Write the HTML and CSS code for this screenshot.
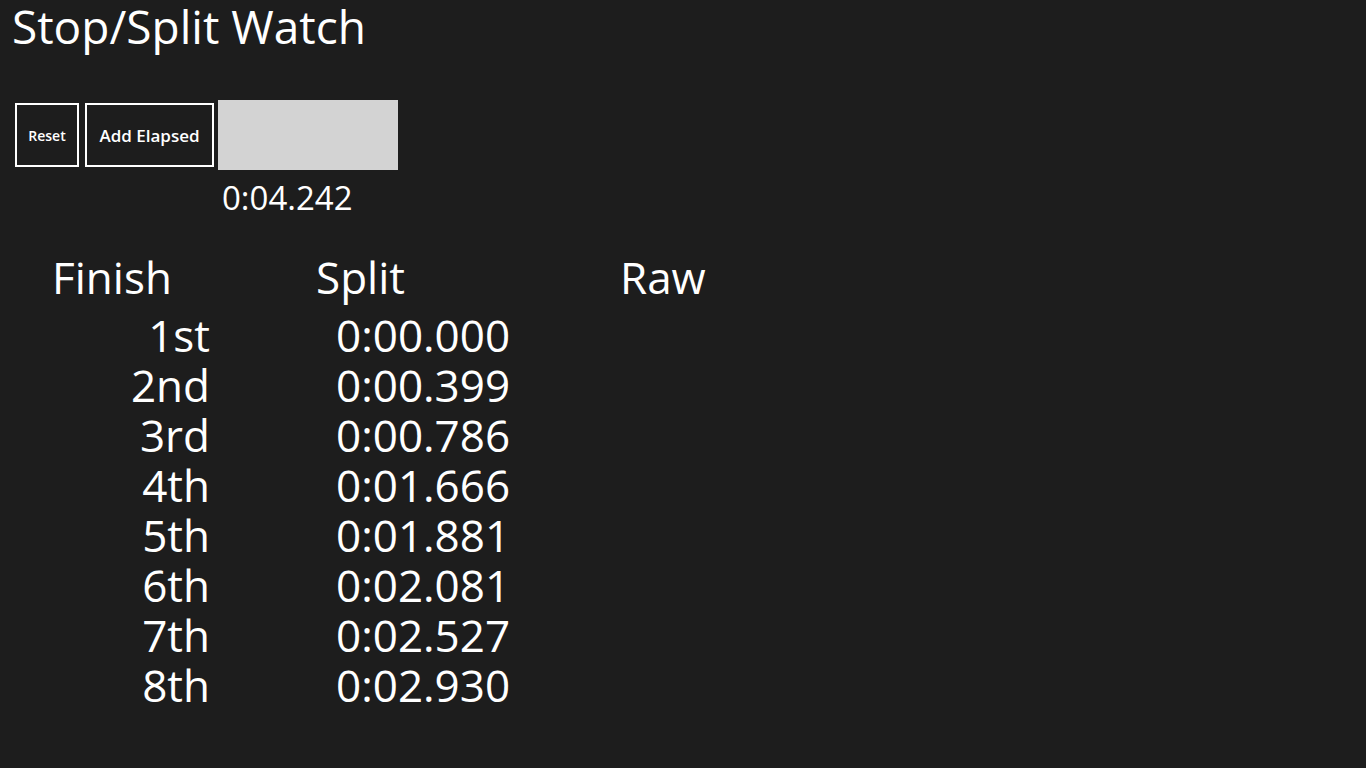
FILE: index.html
```html
<!DOCTYPE html>
<html>
<head>
<meta charset="utf-8">
<link rel="stylesheet" href="styles.css">
</head>
<body>
<div class="page">
  <h1 class="title">Stop/Split Watch</h1>
  <div class="controls">
    <button class="btn btn-reset">Reset</button>
    <button class="btn btn-add">Add Elapsed</button>
    <div class="timer-box">
      <div class="pad"></div>
      <div class="elapsed">0:04.242</div>
    </div>
  </div>
  <div class="table">
    <div class="head">Finish</div>
    <div class="head">Split</div>
    <div class="head">Raw</div>

    <div class="ord">1st</div><div class="val">0:00.000</div><div class="raw"></div>
    <div class="ord">2nd</div><div class="val">0:00.399</div><div class="raw"></div>
    <div class="ord">3rd</div><div class="val">0:00.786</div><div class="raw"></div>
    <div class="ord">4th</div><div class="val">0:01.666</div><div class="raw"></div>
    <div class="ord">5th</div><div class="val">0:01.881</div><div class="raw"></div>
    <div class="ord">6th</div><div class="val">0:02.081</div><div class="raw"></div>
    <div class="ord">7th</div><div class="val">0:02.527</div><div class="raw"></div>
    <div class="ord">8th</div><div class="val">0:02.930</div><div class="raw"></div>
  </div>
</div>
</body>
</html>
```
FILE: styles.css
```css
html, body {
  margin: 0;
  padding: 0;
  background: #1d1d1d;
  color: #ffffff;
  font-family: "Open Sans", "Noto Sans", sans-serif;
}

.page {
  width: 1366px;
  height: 768px;
  overflow: hidden;
}

.title {
  margin: 0;
  padding: 0 0 0 12px;
  font-size: 46px;
  font-weight: 400;
  line-height: 52px;
}

.controls {
  display: flex;
  align-items: flex-start;
  margin: 48px 0 0 15px;
  gap: 6px;
}

.btn {
  margin-top: 3px;
  height: 64px;
  background: transparent;
  border: 2px solid #ffffff;
  color: #ffffff;
  font-family: "Open Sans", "Noto Sans", sans-serif;
  font-weight: 600;
  padding: 0;
  box-sizing: border-box;
}

.btn-reset {
  width: 64px;
  font-size: 14px;
}

.btn-add {
  width: 129px;
  font-size: 17px;
  margin-right: -2px;
}

.timer-box {
  display: flex;
  flex-direction: column;
}

.pad {
  width: 180px;
  height: 70px;
  background: #d3d3d3;
}

.elapsed {
  margin: 8px 0 0 4px;
  font-size: 33px;
  line-height: 40px;
}

.table {
  display: grid;
  grid-template-columns: 264px 304px auto;
  margin: 30px 0 0 52px;
  font-size: 44px;
  line-height: 50px;
}

.head {
  line-height: 58px;
  margin-bottom: 4px;
}

.ord {
  text-align: right;
  padding-right: 106px;
}

.val {
  padding-left: 20px;
}
```
